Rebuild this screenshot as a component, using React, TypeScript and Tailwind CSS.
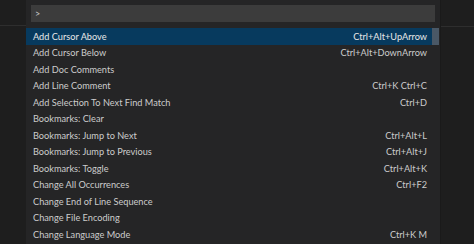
import React from "react";

const rows: [string, string][] = [
  ["Add Cursor Above", "Ctrl+Alt+UpArrow"],
  ["Add Cursor Below", "Ctrl+Alt+DownArrow"],
  ["Add Doc Comments", ""],
  ["Add Line Comment", "Ctrl+K Ctrl+C"],
  ["Add Selection To Next Find Match", "Ctrl+D"],
  ["Bookmarks: Clear", ""],
  ["Bookmarks: Jump to Next", "Ctrl+Alt+L"],
  ["Bookmarks: Jump to Previous", "Ctrl+Alt+J"],
  ["Bookmarks: Toggle", "Ctrl+Alt+K"],
  ["Change All Occurrences", "Ctrl+F2"],
  ["Change End of Line Sequence", ""],
  ["Change File Encoding", ""],
  ["Change Language Mode", "Ctrl+K M"],
];

export default function App() {
  return (
    <div
      className="w-[474px] h-[244px] bg-[#1e1e1e] flex overflow-hidden text-[#cccccc]"
      style={{ fontFamily: 'Lato, "Noto Sans", sans-serif' }}
    >
      <div className="w-[26px] shrink-0">
        <div className="h-[26px] border-b border-[#2e2e2e]" />
      </div>
      <div className="w-[414px] shrink-0 bg-[#252526] flex flex-col">
        <div className="px-[5px] pt-[5px]">
          <div className="h-[17px] bg-[#3c3c3c] flex items-center pl-[4px] text-[9px] leading-none">
            &gt;
          </div>
        </div>
        <div className="mt-[6px] flex">
          <div className="w-[406px]">
            {rows.map(([label, key], i) => (
              <div
                key={label}
                className={`h-[16.5px] flex items-center justify-between pl-[7px] pr-[5px] text-[9.2px] leading-none ${
                  i === 0 ? "bg-[#073a5e] text-[#e8e8e8]" : ""
                }`}
              >
                <span>{label}</span>
                <span>{key}</span>
              </div>
            ))}
          </div>
          <div className="w-[7px] pt-0">
            <div className="h-[17px] bg-[#4a5866]" />
          </div>
        </div>
      </div>
      <div className="flex-1 border-l border-[#1a1a1a]">
        <div className="h-[27px] border-b border-[#2e2e2e]" />
      </div>
    </div>
  );
}
